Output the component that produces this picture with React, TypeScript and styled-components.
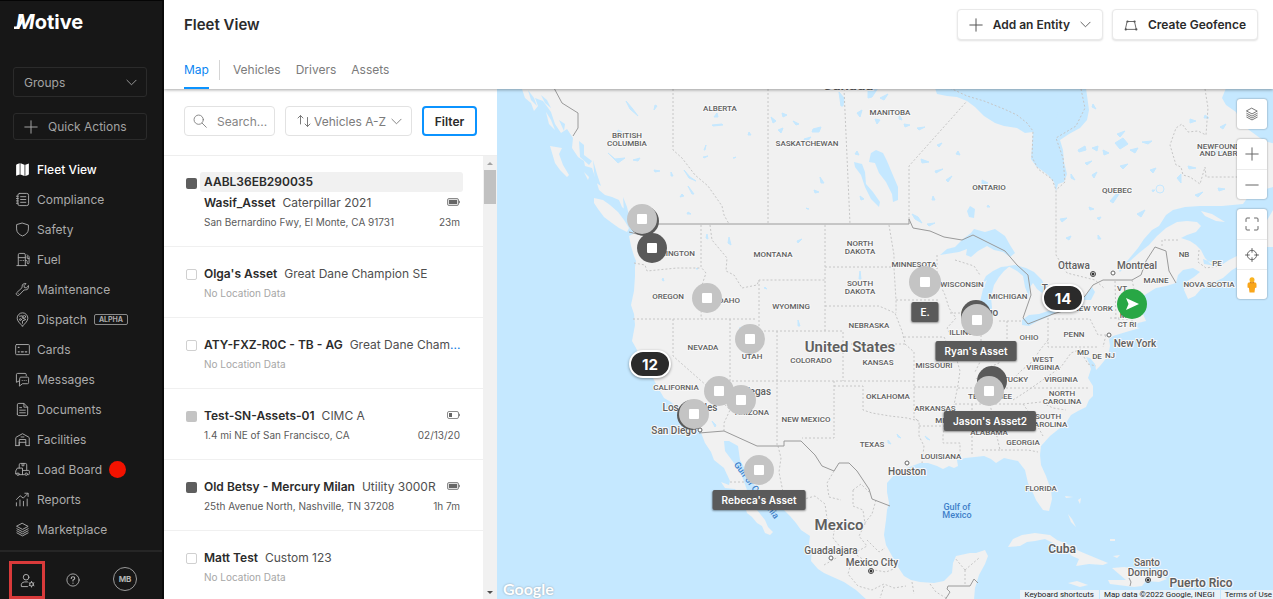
import React from "react";
import styled, { createGlobalStyle, css } from "styled-components";

const GlobalStyle = createGlobalStyle`
  *, *::before, *::after { box-sizing: border-box; }
  html, body { margin: 0; height: 100%; }
  #root { height: 100vh; }
  body {
    font-family: Inter, "Liberation Sans", sans-serif;
    font-size: 12px;
    color: #2b2b2b;
    background: #fff;
  }
  button, input, select { font: inherit; color: inherit; margin: 0; }
  button { cursor: pointer; }
  a { color: inherit; text-decoration: none; }
`;

/* ---------- shell ---------- */

const Shell = styled.div`
  display: grid;
  grid-template-columns: 164px minmax(0, 1fr);
  height: 100%;
  overflow: hidden;
`;

const Sidebar = styled.aside`
  display: flex;
  flex-direction: column;
  background: #171717;
  border-top: 1px solid #050505;
  border-right: 2px solid #0b0b0b;
  color: #b4b4b4;
  overflow: hidden;
`;

const Brand = styled.a`
  display: block;
  height: 66px;
  padding: 9px 0 0 12px;
`;

const BrandText = styled.text`
  font: 700 20px Inter, sans-serif;
  fill: #fff;
`;

const SideControls = styled.div`
  display: flex;
  flex-direction: column;
  gap: 16px;
  padding: 0 15px 14px 13px;
`;

const sideBox = css`
  display: flex;
  align-items: center;
  border: 1px solid #2b2b2b;
  border-radius: 3px;
  background: transparent;
  color: #a3a3a3;
`;

const GroupPicker = styled.label`
  ${sideBox}
  height: 30px;
  padding: 0 9px 0 10px;
`;

const BareSelect = styled.select`
  appearance: none;
  flex: 1;
  min-width: 0;
  padding: 0;
  border: 0;
  outline: 0;
  background: transparent;
`;

const QuickButton = styled.button`
  ${sideBox}
  height: 27px;
  padding: 0 10px;
  gap: 10px;
`;

const NavList = styled.ul`
  flex: 1;
  margin: 0;
  padding: 0;
  list-style: none;
`;

const NavLink = styled.a<{ $active?: boolean }>`
  display: flex;
  align-items: center;
  gap: 7px;
  height: 30px;
  padding-left: 15px;
  color: ${(p) => (p.$active ? "#fff" : "#ababab")};
  font-weight: ${(p) => (p.$active ? 500 : 400)};
`;

const AlphaTag = styled.span`
  padding: 0 4px;
  border: 1px solid #8a8a8a;
  border-radius: 2px;
  font-size: 7px;
  font-weight: 700;
  line-height: 9px;
`;

const RedDot = styled.span`
  width: 17px;
  height: 17px;
  border-radius: 50%;
  background: #f21200;
`;

const SideFooter = styled.div`
  display: flex;
  align-items: flex-end;
  height: 49px;
  flex: none;
  padding-left: 9px;
  border-top: 2px solid #262626;
  color: #b4b4b4;
`;

const FooterButton = styled.button<{ $marked?: boolean }>`
  display: grid;
  place-items: center;
  width: 36px;
  height: 38px;
  padding: 0;
  border: 3px solid ${(p) => (p.$marked ? "#d93a3a" : "transparent")};
  background: transparent;
  & + & { margin-left: 10px; }
`;

const Avatar = styled.button`
  width: 24px;
  height: 24px;
  margin: 0 0 8px 22px;
  padding: 0;
  border: 1px solid #9a9a9a;
  border-radius: 50%;
  background: transparent;
  font-size: 8px;
  font-weight: 700;
`;

/* ---------- header ---------- */

const Main = styled.main`
  display: flex;
  flex-direction: column;
  min-width: 0;
  height: 100%;
  overflow: hidden;
`;

const Header = styled.header`
  position: relative;
  z-index: 2;
  display: flex;
  flex-direction: column;
  justify-content: space-between;
  flex: none;
  height: 89px;
  padding: 9px 15px 0 20px;
  background: #fff;
  box-shadow: 0 1px 3px rgba(0, 0, 0, 0.35);
`;

const HeaderTop = styled.div`
  display: flex;
  align-items: center;
  justify-content: space-between;
`;

const Title = styled.h1`
  margin: 0;
  font-size: 15px;
  font-weight: 600;
`;

const Actions = styled.div`
  display: flex;
  gap: 9px;
`;

const ActionButton = styled.button`
  display: flex;
  align-items: center;
  gap: 10px;
  height: 31px;
  padding: 0 11px;
  border: 1px solid #e9e9e9;
  border-radius: 4px;
  background: #fff;
  box-shadow: 0 1px 2px rgba(0, 0, 0, 0.12);
  font-weight: 600;
  svg { color: #555; }
`;

const Tabs = styled.nav`
  display: flex;
  gap: 15px;
  height: 36px;
  color: #7b7b7b;
`;

const Tab = styled.a<{ $active?: boolean }>`
  height: 36px;
  line-height: 34px;
  border-bottom: 2px solid transparent;
  ${(p) => p.$active && "color: #0b86f3; border-color: #0b93ff;"}
`;

const TabDivider = styled.span`
  width: 1px;
  height: 20px;
  margin: 7px -2px 0 -5px;
  background: #d5d5d5;
`;

/* ---------- list panel ---------- */

const Body = styled.div`
  display: grid;
  grid-template-columns: 333px minmax(0, 1fr);
  flex: 1;
  min-height: 0;
`;

const Panel = styled.section`
  display: flex;
  flex-direction: column;
  min-height: 0;
`;

const Filters = styled.div`
  display: flex;
  gap: 10px;
  flex: none;
  padding: 17px 20px 19px;
`;

const filterBox = css`
  display: flex;
  align-items: center;
  height: 30px;
  border: 1px solid #e2e2e2;
  border-radius: 4px;
  background: #fff;
  color: #7b7b7b;
`;

const SearchBox = styled.label`
  ${filterBox}
  flex: none;
  width: 91px;
  gap: 10px;
  padding: 0 6px 0 8px;
  svg { flex: none; }
`;

const SearchInput = styled.input`
  width: 100%;
  min-width: 0;
  padding: 0;
  border: 0;
  outline: 0;
  background: transparent;
  &::placeholder { color: #858585; opacity: 1; }
`;

const SortBox = styled.label`
  ${filterBox}
  flex: 1;
  min-width: 0;
  gap: 3px;
  padding: 0 9px 0 11px;
  svg { flex: none; }
`;

const FilterButton = styled.button`
  flex: none;
  width: 55px;
  height: 30px;
  padding: 0;
  border: 2px solid #0b93ff;
  border-radius: 4px;
  background: #fff;
  font-weight: 600;
`;

const ListArea = styled.div`
  display: grid;
  grid-template-columns: minmax(0, 1fr) 14px;
  flex: 1;
  min-height: 0;
  border-top: 1px solid #eee;
`;

const Rows = styled.ul`
  margin: 0;
  padding: 0;
  list-style: none;
  overflow: hidden;
`;

const Row = styled.li`
  display: grid;
  grid-template-columns: 11px minmax(0, 1fr);
  column-gap: 7px;
  padding: 16px 23px 16px 22px;
  border-bottom: 1px solid #f0f0f0;
`;

const Status = styled.span<{ $kind: "off" | "idle" | "none" }>`
  width: 11px;
  height: 11px;
  margin-top: 6px;
  border-radius: 2px;
  ${(p) => p.$kind === "off" && "background: #5e5e5e;"}
  ${(p) => p.$kind === "idle" && "background: #c4c4c4;"}
  ${(p) => p.$kind === "none" && "border: 1px solid #d0d0d0;"}
`;

const Serial = styled.div`
  margin: 0 -3px 0 -4px;
  padding-left: 4px;
  border-radius: 3px;
  background: #f1f1f1;
  font-weight: 600;
  line-height: 20px;
`;

const Line = styled.div`
  display: flex;
  align-items: center;
  justify-content: space-between;
  height: 20px;
`;

const Names = styled.div`
  flex: 1;
  min-width: 0;
  white-space: nowrap;
  color: #4f4f4f;
`;

const Name = styled.strong`
  margin-right: 7px;
  font-weight: 600;
  color: #2b2b2b;
`;

const Dots = styled.span`
  color: #0b78e3;
`;

const Small = styled.div<{ $muted?: boolean }>`
  display: flex;
  justify-content: space-between;
  height: 18px;
  font-size: 10px;
  line-height: 20px;
  color: ${(p) => (p.$muted ? "#a6a6a6" : "#5a5a5a")};
`;

const ScrollTrack = styled.div`
  display: flex;
  flex-direction: column;
  align-items: center;
  background: #f1f1f1;
`;

const ScrollThumb = styled.span`
  width: 12px;
  height: 34px;
  margin-bottom: auto;
  background: #c1c1c1;
`;

const ScrollArrow = styled.span<{ $down?: boolean }>`
  width: 6px;
  height: 3px;
  margin: ${(p) => (p.$down ? "5px 0" : "6px 0 5px")};
  background: ${(p) => (p.$down ? "#505050" : "#a3a3a3")};
  clip-path: ${(p) => (p.$down ? "polygon(0 0, 100% 0, 50% 100%)" : "polygon(0 100%, 100% 100%, 50% 0)")};
`;

/* ---------- map ---------- */

const MapArea = styled.section`
  position: relative;
  overflow: hidden;
  background: #c5e8ff;
`;

const MapSvg = styled.svg`
  display: block;
  width: 100%;
  height: 100%;
`;

const MapText = styled.text<{ $size?: number; $weight?: number; $color?: string }>`
  font-family: Roboto, sans-serif;
  font-size: ${(p) => p.$size ?? 8}px;
  font-weight: ${(p) => p.$weight ?? 500};
  fill: ${(p) => p.$color ?? "#5f5f5f"};
  stroke: ${(p) => (p.$color ? "none" : "#f8f8f8")};
  stroke-width: 2px;
  stroke-linejoin: round;
  paint-order: stroke;
  text-anchor: middle;
`;

const onMap = css<{ $x: number; $y: number }>`
  position: absolute;
  left: ${(p) => p.$x}px;
  top: ${(p) => p.$y}px;
  transform: translate(-50%, -50%);
`;

const Pin = styled.button<{ $x: number; $y: number; $tone: string; $big?: boolean }>`
  ${onMap}
  display: grid;
  place-items: center;
  width: ${(p) => (p.$big ? 32 : 30)}px;
  height: ${(p) => (p.$big ? 32 : 30)}px;
  padding: 0;
  border: 0;
  border-radius: 50%;
  background: ${(p) => p.$tone};
`;

const PinSquare = styled.span`
  width: 10px;
  height: 10px;
  border-radius: 1px;
  background: #fff;
`;

const Cluster = styled.button<{ $x: number; $y: number }>`
  ${onMap}
  width: 42px;
  height: 28px;
  padding: 0;
  border: 2px solid #fff;
  border-radius: 14px;
  background: #2b2b2b;
  box-shadow: 0 1px 3px rgba(0, 0, 0, 0.4);
  color: #fff;
  font-size: 15px;
  font-weight: 700;
`;

const PinLabel = styled.span<{ $x: number; $y: number }>`
  ${onMap}
  height: 20px;
  padding: 0 9px;
  border-radius: 2px;
  background: #5a5a5a;
  box-shadow: 0 1px 2px rgba(0, 0, 0, 0.4);
  color: #fff;
  font-size: 10px;
  font-weight: 600;
  line-height: 20px;
  white-space: nowrap;
`;

const MapControls = styled.div`
  position: absolute;
  top: 10px;
  right: 6px;
  display: flex;
  flex-direction: column;
  gap: 10px;
`;

const ControlGroup = styled.div`
  display: flex;
  flex-direction: column;
  border-radius: 3px;
  background: #fff;
  box-shadow: 0 0 2px rgba(0, 0, 0, 0.45);
`;

const ControlButton = styled.button`
  display: grid;
  place-items: center;
  width: 30px;
  height: 30px;
  padding: 0;
  border: 0;
  background: transparent;
  color: #666;
  & + & { border-top: 1px solid #ececec; }
`;

const GoogleMark = styled.span`
  position: absolute;
  left: 6px;
  bottom: 0;
  color: #fff;
  font-family: Lato, sans-serif;
  font-size: 16px;
  font-weight: 700;
  line-height: 20px;
  text-shadow: 0 0 2px #8c9aa5;
`;

const Attribution = styled.div`
  position: absolute;
  right: 0;
  bottom: 0;
  display: flex;
  gap: 1px;
  color: #222;
  font-family: Roboto, sans-serif;
  font-size: 8px;
  line-height: 9px;
  a, span { padding: 0 5px 0 4px; background: rgba(245, 245, 245, 0.75); white-space: nowrap; }
  a:last-child { padding-right: 1px; }
`;

/* ---------- icons ---------- */

type IconProps = { children: React.ReactNode; size?: number; box?: number; width?: number };

const Icon = ({ children, size = 15, box = 16, width = 1 }: IconProps) => (
  <svg
    width={size}
    height={size}
    viewBox={`0 0 ${box} ${box}`}
    fill="none"
    stroke="currentColor"
    strokeWidth={width}
    strokeLinecap="round"
    strokeLinejoin="round"
    aria-hidden="true"
  >
    {children}
  </svg>
);

const Chevron = () => (
  <Icon size={11} box={12}><path d="M1 3.500l5 5 5-5" /></Icon>
);
const Plus = ({ size = 14 }: { size?: number }) => (
  <Icon size={size} box={14}><path d="M7 .8v12.400M.8 7h12.400" /></Icon>
);
const LayersIcon = ({ size = 15 }: { size?: number }) => (
  <Icon size={size}>
    <path d="M8 1.500l6 3.200-6 3.200-6-3.200z" />
    <path d="M2 7.200l6 3.200 6-3.200M2 9.400l6 3.200 6-3.200M2 11.600l6 3.200 6-3.200" />
  </Icon>
);

const icons: Record<string, React.ReactNode> = {
  fleet: (
    <svg width="15" height="15" viewBox="0 0 16 16" fill="currentColor" aria-hidden="true">
      <path d="M1.200 3.400Q1.200 2.600 2 2.300L4.900 1.400V13.400L1.200 14.600zM6 1.400l4 1.600v12L6 13.400zM11.100 3l3.700-1.400v11.200q0 .8-.8 1l-2.900 1.100z" />
      <path d="M4.500 1.500h2v12h-2zM9.800 3h1.600v12H9.800z" fillOpacity=".35" />
    </svg>
  ),
  compliance: (
    <Icon>
      <rect x="3" y="1.500" width="11.500" height="13" rx="2" />
      <path d="M6 5h5.500M6 8h5.500M6 11h5.500M1.500 4.500h2M1.500 7h2M1.500 9.500h2M1.500 12h2" />
    </Icon>
  ),
  safety: <Icon><path d="M8 1.200l6.300 2v4.200c0 3.800-2.700 6.200-6.300 7.500C4.400 13.600 1.700 11.200 1.700 7.400V3.200z" /></Icon>,
  fuel: (
    <Icon>
      <path d="M3.500 14.500V3q0-1.500 1.500-1.500h4.500Q11 1.500 11 3v11.500M2 14.500h10.500M3.500 6H11M5.500 9v.1M7.300 9v.1M9 9v.1M11 9h1q1 0 1 1v1.500q0 1 1 1t1-1V5l-2-2M13 4.500v2.200l2 .3" />
    </Icon>
  ),
  maintenance: (
    <Icon>
      <path d="M14.300 4.300l-2.300 2-2-.4-.4-2 2.100-2.200C9.500 1 7.400 2.500 7.600 5l-.2 1.200-5.600 5.200c-1.500 1.600.9 4 2.500 2.600l5.400-5.500 1.300-.1c2.400.1 4.200-1.800 3.300-4.100z" />
      <path d="M3.400 12.500v.1" />
    </Icon>
  ),
  dispatch: (
    <Icon>
      <path d="M8 15C5 12 2.300 9.500 2.300 6.600a5.700 5.700 0 0 1 11.400 0C13.700 9.500 11 12 8 15z" />
      <circle cx="10" cy="5" r="1.300" />
      <circle cx="5.800" cy="8" r="1" />
      <path d="M4.800 4.500l3-.5v2.500L11.500 8 8 9.500V12" />
    </Icon>
  ),
  cards: (
    <Icon>
      <rect x=".7" y="2.700" width="14.600" height="10.800" rx="1" />
      <path d="M3.500 5.700h.8M3.500 10.500h1M6.800 10.500h2M11 10.500h1.500" strokeWidth="1.400" />
    </Icon>
  ),
  messages: (
    <Icon>
      <path d="M4.500 9.500L1.500 11V2.800q0-1.300 1.300-1.300h8q1.200 0 1.200 1.300V4" />
      <path d="M5 6.700q0-1.200 1.200-1.200h7.100q1.200 0 1.200 1.200v4.600q0 1.200-1.200 1.200H8l-3 2.300zM7.700 9v.1M9.800 9v.1M11.900 9v.1" />
    </Icon>
  ),
  documents: (
    <Icon>
      <path d="M2.500 13V3q0-1.500 1.500-1.500h5.500l4 4V13q0 1.500-1.500 1.500H4q-1.500 0-1.500-1.500z" />
      <path d="M9.500 1.500v4h4M5 6h2M5 8.700h6M5 11.500h6" />
    </Icon>
  ),
  facilities: (
    <Icon>
      <path d="M.8 14.500V6.500q0-.8.8-1.200L8 1.800l6.400 3.500q.8.400.8 1.200v8M.8 14.500h3.700V8h7v6.500h3.700M4.500 11h7M4.500 14.500V11M6.500 5.300h3" />
    </Icon>
  ),
  load: (
    <Icon>
      <path d="M4.500 6.500V3q0-1.500 1.500-1.500h5Q12.500 1.500 12.500 3v5.500M7.500 1.500v2.500h2V1.500" />
      <path d="M.8 12.500v-3l1.700-3H8v7M.8 12.500h1M4.700 13.500H10M8 9h6.500q.8 0 .8.800v2.700q0 1-1 1h-.5" />
      <circle cx="3.200" cy="13" r="1.300" />
      <circle cx="12" cy="13" r="1.300" />
    </Icon>
  ),
  reports: (
    <Icon>
      <path d="M1.500 14.800v-3.300M5.300 14.800V8.500M9 14.800V10M13 14.800V7.500M1.500 8l4-4 3.300 2.500 5-5M10.500 1.300h3.500v3.500" />
    </Icon>
  ),
  market: <LayersIcon />,
};

const Battery = ({ low }: { low?: boolean }) => (
  <svg width="13" height="8" viewBox="0 0 13 8" aria-label={low ? "Battery low" : "Battery full"} role="img">
    <rect x=".5" y=".5" width="11" height="7" rx="1.500" fill={low ? "none" : "#dcdcdc"} stroke="#8c8c8c" />
    <rect x="2" y="2" width={low ? 3 : 8} height="4" fill="#666" />
    <path d="M12.500 2.800v2.400" stroke="#8c8c8c" />
  </svg>
);

/* ---------- data ---------- */

const navItems: [string, string][] = [
  ["fleet", "Fleet View"],
  ["compliance", "Compliance"],
  ["safety", "Safety"],
  ["fuel", "Fuel"],
  ["maintenance", "Maintenance"],
  ["dispatch", "Dispatch"],
  ["cards", "Cards"],
  ["messages", "Messages"],
  ["documents", "Documents"],
  ["facilities", "Facilities"],
  ["load", "Load Board"],
  ["reports", "Reports"],
  ["market", "Marketplace"],
];

type Asset = {
  status: "off" | "idle" | "none";
  serial?: string;
  name: string;
  model: string;
  cut?: boolean;
  place?: string;
  when?: string;
  battery?: "full" | "low";
};

const assets: Asset[] = [
  { status: "off", serial: "AABL36EB290035", name: "Wasif_Asset", model: "Caterpillar 2021", place: "San Bernardino Fwy, El Monte, CA 91731", when: "23m", battery: "full" },
  { status: "none", name: "Olga's Asset", model: "Great Dane Champion SE" },
  { status: "none", name: "ATY-FXZ-R0C - TB - AG", model: "Great Dane Cham", cut: true },
  { status: "idle", name: "Test-SN-Assets-01", model: "CIMC A", place: "1.4 mi NE of San Francisco, CA", when: "02/13/20", battery: "low" },
  { status: "off", name: "Old Betsy - Mercury Milan", model: "Utility 3000R", place: "25th Avenue North, Nashville, TN 37208", when: "1h 7m", battery: "full" },
  { status: "none", name: "Matt Test", model: "Custom 123" },
];

const LIGHT = "#c4c4c4";
const DARK = "#5a5a5a";

const pins: { x: number; y: number; tone: string; big?: boolean; name: string }[] = [
  { x: 147, y: 132, tone: DARK, name: "Seattle asset" },
  { x: 145, y: 130, tone: LIGHT, name: "Vancouver asset" },
  { x: 155, y: 159, tone: DARK, name: "Washington asset" },
  { x: 210, y: 209, tone: LIGHT, name: "Idaho asset" },
  { x: 253, y: 250, tone: LIGHT, name: "Utah asset" },
  { x: 428, y: 193, tone: LIGHT, big: true, name: "Minnesota asset" },
  { x: 479, y: 226, tone: DARK, name: "Chicago asset" },
  { x: 480, y: 231, tone: LIGHT, big: true, name: "Illinois asset" },
  { x: 495, y: 292, tone: DARK, name: "Kentucky asset" },
  { x: 492, y: 302, tone: LIGHT, name: "Tennessee asset" },
  { x: 244, y: 311, tone: LIGHT, name: "Arizona asset" },
  { x: 222, y: 302, tone: LIGHT, name: "Las Vegas asset" },
  { x: 195, y: 326, tone: DARK, name: "Los Angeles asset" },
  { x: 197, y: 325, tone: LIGHT, name: "San Diego asset" },
  { x: 262, y: 381, tone: LIGHT, name: "Sonora asset" },
];

const pinLabels: [string, number, number][] = [
  ["E.", 428, 223],
  ["Ryan's Asset", 479, 262],
  ["Jason's Asset2", 493, 332],
  ["Rebeca's Asset", 262, 411],
];

const regionLabels: [string, number, number][] = [
  ["ALBERTA", 720, 111], ["BRITISH", 627, 138], ["COLUMBIA", 627, 146], ["MANITOBA", 890, 115],
  ["SASKATCHEWAN", 807, 146], ["ONTARIO", 989, 190], ["QUEBEC", 1117, 193], ["NEWFOUNDLAND", 1229, 149],
  ["AND LABRADOR", 1229, 156], ["WASHINGTON", 669, 256], ["MONTANA", 773, 257], ["NORTH", 860, 246],
  ["DAKOTA", 860, 254], ["SOUTH", 860, 286], ["DAKOTA", 860, 294], ["MINNESOTA", 914, 267],
  ["WISCONSIN", 962, 287], ["MICHIGAN", 1008, 299], ["OREGON", 668, 299], ["IDAHO", 728, 303],
  ["WYOMING", 791, 309], ["NEBRASKA", 869, 328], ["ILLINOIS", 965, 335], ["OHIO", 1029, 340],
  ["PENN", 1074, 337], ["NEW YORK", 1093, 311], ["VT", 1122, 291], ["MAINE", 1156, 283],
  ["NB", 1184, 257], ["PE", 1217, 266], ["NOVA SCOTIA", 1209, 287], ["CT RI", 1127, 327],
  ["MA", 1126, 318], ["NEVADA", 703, 350], ["UTAH", 752, 359], ["COLORADO", 811, 363],
  ["KANSAS", 878, 365], ["MISSOURI", 934, 368], ["CALIFORNIA", 676, 390], ["ARIZONA", 752, 415],
  ["NEW MEXICO", 806, 422], ["OKLAHOMA", 888, 399], ["ARKANSAS", 935, 411], ["TEXAS", 872, 447],
  ["LOUISIANA", 941, 459], ["MISSISSIPPI", 958, 423], ["ALABAMA", 989, 435], ["GEORGIA", 1023, 445],
  ["KENTUCKY", 1008, 382], ["TENNESSEE", 990, 399], ["WEST", 1043, 362], ["VIRGINIA", 1043, 370],
  ["VIRGINIA", 1061, 382], ["NORTH", 1062, 396], ["CAROLINA", 1062, 404], ["SOUTH", 1048, 419],
  ["CAROLINA", 1048, 427], ["MD", 1083, 355], ["DE", 1097, 359], ["NJ", 1110, 358], ["FLORIDA", 1041, 491],
];

const cityLabels: [string, number, number][] = [
  ["Ottawa", 1074, 269], ["Montreal", 1137, 269], ["Toronto", 1059, 292], ["Chicago", 980, 316],
  ["New York", 1135, 347], ["Las Vegas", 748, 395], ["Los Angeles", 690, 411], ["San Diego", 674, 434],
  ["Houston", 907, 475], ["Guadalajara", 831, 554], ["Mexico City", 872, 566], ["Santo", 1147, 566],
  ["Domingo", 1148, 576],
];

const land = [
  "M515 80L522 89 525 98 531 103 534 111 538 106 535 98 543 101 551 112 555 124 561 133 567 129 573 138 572 148 578 157 584 161 585 166 592 168 596 180 599 190 605 195 612 197 619 200 622 207 627 211 629 221 635 226 633 234 629 236 631 246 634 256 636 261 635 267 635 276 634 291 631 305 634 314 635 325 632 341 636 348 640 357 645 366 653 378 657 386 664 398 671 402 679 410 687 416 694 425 700 430 705 443 711 452 714 460 724 468 730 481 729 485 721 482 725 488 735 489 743 500 747 513 752 517 757 523 762 526 765 533 770 535 773 532 768 527 765 520 757 510 752 500 747 490 742 476 734 463 725 451 724 441 729 441 738 446 740 460 747 473 757 489 766 497 774 503 784 510 790 516 796 523 801 530 810 536 809 544 812 549 811 561 818 569 824 573 844 582 856 590 867 600 L974 600 975 588 979 575 985 564 988 556 985 550 976 553 970 553 956 556 953 563 952 573 944 581 934 583 920 582 911 580 904 576 898 567 892 556 886 545 884 535 886 520 887 510 889 503 887 492 887 483 894 475 901 471 907 468 920 463 928 463 937 466 943 469 949 466 954 468 958 466 957 460 965 458 975 457 984 456 991 459 996 463 1004 458 1013 460 1018 461 1025 470 1028 483 1033 493 1036 500 1043 510 1049 511 1052 499 1051 490 1046 476 1041 465 1040 455 1041 446 1050 436 1060 428 1066 423 1071 415 1078 411 1086 407 1089 400 1093 396 1093 386 1088 378 1091 369 1089 363 1086 357 1090 358 1095 364 1096 370 1100 366 1108 356 1110 346 1109 339 1113 336 1126 332 1140 328 1132 327 1138 323 1146 321 1143 314 1139 310 1140 303 1143 296 1156 288 1166 286 1176 283 1178 275 1183 270 1193 268 1200 272 1194 277 1186 282 1184 290 1188 299 1195 296 1201 289 1212 283 1223 278 1232 270 1241 265 1237 256 1229 260 1220 266 1211 264 1205 258 1201 250 1196 245 1190 241 1181 238 1187 235 1196 232 1201 226 1197 222 1187 221 1177 222 1166 228 1157 236 1149 245 1139 253 1129 262 1120 272 1119 271 1128 260 1138 248 1144 239 1152 230 1159 226 1166 215 1173 210 1185 207 1200 206 1222 206 1243 204 1248 197 1256 192 1273 187 1280 186 1280 145 1268 142 1260 138 1249 130 1240 121 1236 112 1226 105 1222 98 1226 88 1223 80z",
  "M594 198l9 2 7 5 8 7 6 8 5 8-2 4-8-4-7-5-8-6-6-8-4-6z",
  "M550 146l12 2-3 6 4 11 6 10-2 2-7-7-5-7z",
  "M1008 547l5-8 9-4 13-2 15 2 7 5 10 4 12 7 12 5 17 7-5 2-14-1-13 2 3-7-7-3-8-8-11-5-8-4-10 2-8 1-7 4z",
  "M1112 568l12-1 14 2 14 2 10 5 5 3-8 3-13-1-4 5-8 1-24-3-2-4 18 0z",
  "M1068 583l9-2 11 4-8 2z",
  "M1065 496l8 1-7 1zM1078 500l3-2-1 6zM1068 514l4 5 4 8-5-5zM1110 539h5v2h-5zM1113 556l7-1-3 3z",
  "M1201 211l11 3 13 8-9-1-11-5z",
  "M1203 259l10 4 8-1-5 4-12-2z",
  "M1273 210l-7 12-6 22 6 3 14 0v-40z",
  "M541 95l6 5 4 8-6-5zM528 90l6 8 3 8-6-6zM546 112l5 8 4 10-6-6zM559 120l6 4-1 7zM584 172l5 5-1 3z",
].join("");

const water = [
  "M934 85l3 9 10 2 10 1 10 4 8 6 9 9 11 7 9 3 13 2 8 5 8-1-1 14-1 13 5 7 12 9 6 7 2 9 2-7 6-2 3-8-3-12-1-12-3-10 9-6 11-6 7-8 2-10-3-22z",
  "M940 255l7-6 8-2 8-8 8-6 3-4 11 3 10-3 10 7 5 9 5 8-5 4-7-5-9-2-7-4-9 5-7 6-5-2 1-6-8 3z",
  "M986 276l7-5 8-4 9-1-6 5-5 6-5 8-3 12 1 11-1 9-7 5-5-7 1-13 3-13 4-9-5 4z",
  "M1008 266l7-1 11 3 8 4 8 8 3 7-3 6-5-4-4-6-3 4-1 10-4-10-2-11-6-5z",
  "M1022 320l7-5 10-1 9-3 9 0-7 5-12 5-9 5-7-1z",
  "M1081 300l6-6 5-7 3 5-4 8z",
  "M871 153l5-3 7 3 4 8 5 12 6 14 0 13-5 2-1-8-6-12-7-9-4-10-6-1 1-5z",
  "M854 162l8 2 3 8 1 12 7 8 7 10-1 5-8-8-6-12-4-12-6-8z",
  "M967 211l3-5 5 3-1 9-5-1z",
  "M579 141l5 4 0 10 8 6-3 4-9-8zM593 160l4 14 4 12-6-4zM623 197l4 10 3 12 4 6-4-1-6-12zM618 208l-7-4-8-6 10 3z",
].join("");

const lakes = [
  "M626 101l6 7 6 8-8-7zM655 105l2 1-3 4zM608 153l7 6 10-1-7 5zM618 130l4 2-5 1zM640 158l-7 2 5 1zM654 170l6 1-5 1zM671 172l2 4-2 0zM684 170l6 7 6 4-7-3zM688 186l6 8-2 0zM688 212l3 2-4 0zM682 194l2 2-4 1zM703 157l5-1-4 2zM706 145l-1 5-1 0zM712 125l10-1 1 1-10 1zM749 132l2 3-3 0zM717 113l-3 4 4 0zM736 157l-3 1 2 0zM729 237l2 8-3-2zM707 234l1 5-2-1zM663 278l1 3-2-1zM697 268l1 1-2 0z",
  "M782 113l5 2-4 2zM793 121l6 3-3 1zM813 129l8-2-2 5-7 0zM771 117l5 4-3 2zM778 130l5-2-2 5zM804 139l7-2-5 6zM820 177l4 6-3 0zM814 190l5 2-4 1zM806 208l3 1-2 0zM797 241l5-2-4 4zM839 92l5 6-1 8-2 0zM868 89l12-4-8 12-4 1zM880 98l8-4-4 6zM862 110l-2 7-3-4zM875 119l5 1-3 4zM904 124l6 1-5 2zM917 128l8-1-6 3zM921 159l8 3-7 1zM937 145l5-2-3 4zM958 151l2 4-4-1zM935 171l8-2-7 4zM946 180l6-4-4 6zM982 180l6 3-6 1zM988 205l2 2-3 0zM912 214l6 3 4 6-7-4zM927 224l8-1-6 3zM933 196l2 4-3 0zM857 151l2 4-4-1zM899 113l3 7-3-1zM860 196l4 3-3 1zM765 287l2 2-3-1zM798 320l2 6-2 0zM860 271l1 8-2 0z",
  "M1052 108l8-6 4 4-6 6-2 6-4-4zM1078 150l7-4 1 4-7 2zM1092 148l6-2-1 5zM1103 150l6 3-5 2zM1115 143l8-5 5 6-8 5zM1130 150l8-2-3 5zM1117 134l8-3-5 6zM1142 142l10-1-4 3zM1085 163l7-2-5 4zM1092 175l5-3-3 6zM1120 166l8-2-5 5zM1110 201l8-9 3-1-8 12zM1071 174l4 6-4-2zM1060 219l7-1-5 4zM1066 238l5-2-2 4zM1089 207l5 2-4 1zM1098 235l3 4-3 0zM1137 214l8-4-4 7zM1150 170l6-2-3 5zM1177 178l4-4 0 9zM1188 166l8 2-7 1zM1190 119l6 2-6 2zM1205 115l4 3-5 0zM1220 127l6-3-3 5zM1215 151l8 1-7 2zM1195 195l8-3-5 5zM1218 188l7 1-6 2zM1152 190l3 0-2 2zM1067 120l4-2-2 5zM1093 104l3 5-4-2zM1097 218l4-1-2 3z",
  "M740 327l3 6 0 3-3-4zM712 421l4 4-1 2zM925 436l5 4-3-1zM897 434l4 4-3-1zM888 440l3 4-3-1zM717 488l3 1-2 1zM1043 488l2 2-3 0z",
].join("");

const solidBorders =
  "M554 88l8 15 16 10 0 15-5 8M629 232l12 3 12-3 4-8h252v-5l4 9 17 3 14 6 18 3 11-5 32 16 12 14 11 10 3 20-8 23 5 6 25-10 20-6 12-12 8-11 10-5h29l9-5 5-14 9-14 11 4 3 20 7 12M699 433l25-2 33 15h27v-5h17l14 14 7 11 12 5 5-8h10l8 8 12 18 3 10 18 7M945 600l5-8-3-3 1-3h22l4-7 4 4M1129 578l2 4-1 4";

const dashedBorders =
  "M673 89v61l9 8 13 17 13 11 14 20 2 9 5 9M768 89v135M844 89l6 135M909 219v-53l58-65M950 88l17 8 17 5 20 8 13 6 10 8 6 8-1 26 6 12 14 10 4 11v65l11 18 28 7 10 9M1081 89l4 19-9 18-20 12 7 20 2 24-9 8M1205 89l3 19-2 27-8-4-10 1-6-8-6 4-6 17 6 20 5 2 2 8 7 2 10 7 5-17 1 10h37M1162 246v-6h18M1199 250l-1 12 8 6 12-2M634 263l11 2 2 6 30-3h24M701 225v42l5 6-4 12-1 34M633 319h124M710 225l2 15 15 18-1 13 8 4 8 13 15-3 2-5h66M759 280v51h84v50M825 225v106M673 319v37l34 30 23 24-6 13v8M730 319v62M712 381h202M777 331v115M834 381v57h-32M834 386h29v24l9 3 18 3 17 2 12 3v15l5 10-2 17M825 306h54l16 7 7 18 3 12M843 344h62M825 267h69M889 225l5 30v13l2 32v13M896 300h44M904 337h40l4 8 8 12 4 14-2 14-4 20-8 16-3 14v8h17v12M905 344l9 8v66l5 3M919 426h26M914 387h44M937 255v23l8 17 4 13 7 10-9 10 4 8M950 313h32M955 260l19 6 6 9M981 335v25l-6 12M1007 321v30l-8 12-14 6-9 10M999 321h23M1048 318v29h50M1054 319h36l8 16h8M1048 340l-8 10-8 12-10 8-10 10M958 388h130M955 404h68l18-2 12 6 13 2M972 404v52M990 404l6 28 4 18h28l10 2M1023 404l10 14 10 18M1013 400l14-9 20-14 14-10 10-14 10-4M982 450h18M1115 281l1 38h14M1132 280l4 18M1110 318h22v8M1106 335l-3 12M1080 350l8 14 8 2M778 446l3 12-2 14 4 20 18 8 14-4 10 8 2 14 8 8M834 471l-7 12 2 14 12 3M853 490l8-6 8 8M853 490v16l10 4 2 14-6 12 8 10-14 8-12-6-8-10 2-12M876 500l-4 14-8 10M867 540l12 12 6-4M812 552l14-4 12 6 14-2 12 8 10 10 12 2 10-4M824 565l14-8M852 560l-4 14 10 12 14 4 12-6 10 4 12-2M884 586l-4 12M912 582l2 12M930 584l6 8 10 6M965 570v14M965 570l-10-12M965 570l14-12M730 482h14";

/* ---------- pieces ---------- */

const FleetMap = () => (
  <MapArea aria-label="Fleet map">
    <MapSvg viewBox="497 89 776 510" preserveAspectRatio="xMinYMin slice" role="img" aria-label="Map of North America">
      <path d={land} fill="#f1f1f1" />
      <path d={water} fill="#c5e8ff" />
      <path d={lakes} fill="#c5e8ff" stroke="#c5e8ff" strokeWidth="1" strokeLinejoin="round" />
      <circle cx="1160" cy="189" r="4" fill="none" stroke="#c5e8ff" />
      <path d={dashedBorders} fill="none" stroke="#c6c6c6" strokeDasharray="2 2" strokeLinejoin="round" />
      <path d={solidBorders} fill="none" stroke="#9a9a9a" strokeLinejoin="round" />
      {regionLabels.map(([t, x, y], i) => (
        <MapText key={i} x={x} y={y}>{t}</MapText>
      ))}
      {cityLabels.map(([t, x, y]) => (
        <MapText key={t} x={x} y={y} $size={10}>{t}</MapText>
      ))}
      <MapText x="848" y="90" $size={15} $weight={600}>Canada</MapText>
      <MapText x="850" y="352" $size={15} $weight={600}>United States</MapText>
      <MapText x="839" y="530" $size={15} $weight={600}>Mexico</MapText>
      <MapText x="1062" y="553" $size={12} $weight={600}>Cuba</MapText>
      <MapText x="1201" y="587" $size={12} $weight={600}>Puerto Rico</MapText>
      <MapText x="957" y="510" $size={9} $color="#3f7fc9">Gulf of</MapText>
      <MapText x="957" y="518" $size={9} $color="#3f7fc9">Mexico</MapText>
      <MapText transform="translate(754 492) rotate(53)" $size={9} $color="#3f7fc9">Gulf of California</MapText>
      <g fill="#fff" stroke="#666">
        {[[1113, 273], [1109, 335], [907, 463], [831, 558], [700, 430]].map(([x, y]) => (
          <circle key={x} cx={x} cy={y} r="2" />
        ))}
      </g>
      {[[1093, 274], [871, 571], [1148, 580]].map(([x, y]) => (
        <g key={x}>
          <circle cx={x} cy={y} r="2.500" fill="#fff" stroke="#444" />
          <circle cx={x} cy={y} r="1.500" fill="#333" />
        </g>
      ))}
    </MapSvg>
    {pins.map((p) => (
      <Pin key={p.name} type="button" aria-label={p.name} $x={p.x} $y={p.y} $tone={p.tone} $big={p.big}>
        {p.tone === LIGHT || p.name === "Washington asset" ? <PinSquare /> : null}
      </Pin>
    ))}
    {pinLabels.map(([t, x, y]) => (
      <PinLabel key={t} $x={x} $y={y}>{t}</PinLabel>
    ))}
    <Cluster type="button" $x={153} $y={275}>12</Cluster>
    <Cluster type="button" $x={566} $y={209}>14</Cluster>
    <Pin type="button" aria-label="Moving vehicle" $x={635} $y={215} $tone="#28a745">
      <svg width="14" height="14" viewBox="0 0 14 14" fill="#fff" aria-hidden="true">
        <path d="M1 1l13 6-13 6 2.500-6z" />
      </svg>
    </Pin>
    <MapControls>
      <ControlGroup>
        <ControlButton type="button" aria-label="Map layers"><LayersIcon size={14} /></ControlButton>
      </ControlGroup>
      <ControlGroup>
        <ControlButton type="button" aria-label="Zoom in"><Plus /></ControlButton>
        <ControlButton type="button" aria-label="Zoom out"><Icon size={14} box={14}><path d="M.8 7h12.400" /></Icon></ControlButton>
      </ControlGroup>
      <ControlGroup>
        <ControlButton type="button" aria-label="Full screen">
          <Icon size={14} box={14}><path d="M1 4.500V2q0-1 1-1h2.500M9.500 1H12q1 0 1 1v2.500M13 9.500V12q0 1-1 1H9.500M4.500 13H2q-1 0-1-1V9.500" /></Icon>
        </ControlButton>
        <ControlButton type="button" aria-label="Centre map">
          <Icon size={14} box={14}><circle cx="7" cy="7" r="4.700" /><path d="M7 .5v3.800M7 9.700v3.800M.5 7h3.800M9.700 7h3.800" /></Icon>
        </ControlButton>
        <ControlButton type="button" aria-label="Street View">
          <svg width="10" height="16" viewBox="0 0 10 16" aria-hidden="true">
            <circle cx="5" cy="2.700" r="2.500" fill="#f9b31f" />
            <path d="M1.500 5.500h7q1 .5 1 2v3l-1.500.5-.5 4.500h-5L2 11l-1.500-.5v-3q0-1.500 1-2z" fill="#f9a61a" />
            <path d="M2.800 4.600q2.200 1.600 4.400 0v1.700H2.800zM2.200 8v3l.5 4M7.800 8v3" fill="#d9831a" />
          </svg>
        </ControlButton>
      </ControlGroup>
    </MapControls>
    <GoogleMark>Google</GoogleMark>
    <Attribution>
      <a href="#shortcuts">Keyboard shortcuts</a>
      <span>Map data ©2022 Google, INEGI</span>
      <a href="#terms">Terms of Use</a>
    </Attribution>
  </MapArea>
);

const AssetRow = ({ asset }: { asset: Asset }) => (
  <Row>
    <Status $kind={asset.status} />
    <div>
      {asset.serial && <Serial>{asset.serial}</Serial>}
      <Line>
        <Names>
          <Name>{asset.name}</Name>
          {asset.model}
          {asset.cut && <Dots>...</Dots>}
        </Names>
        {asset.battery && <Battery low={asset.battery === "low"} />}
      </Line>
      <Small $muted={!asset.place}>
        <span>{asset.place ?? "No Location Data"}</span>
        {asset.when && <span>{asset.when}</span>}
      </Small>
    </div>
  </Row>
);

export default function App() {
  return (
    <>
      <GlobalStyle />
      <Shell>
        <Sidebar>
          <Brand href="#home" aria-label="Motive">
            <svg width="76" height="24" viewBox="0 0 76 24">
              <path d="M2 17.800h2q2 0 3-1.500L11 9" fill="none" stroke="#fff" strokeWidth="2.600" />
              <BrandText x="4" y="19"><tspan fontStyle="italic">M</tspan>otive</BrandText>
            </svg>
          </Brand>
          <SideControls>
            <GroupPicker>
              <BareSelect aria-label="Groups" defaultValue="groups">
                <option value="groups">Groups</option>
              </BareSelect>
              <Chevron />
            </GroupPicker>
            <QuickButton type="button"><Plus />Quick Actions</QuickButton>
          </SideControls>
          <NavList>
            {navItems.map(([key, label]) => (
              <li key={key}>
                <NavLink href={`#${key}`} $active={key === "fleet"}>
                  {icons[key]}
                  {label}
                  {key === "dispatch" && <AlphaTag>ALPHA</AlphaTag>}
                  {key === "load" && <RedDot />}
                </NavLink>
              </li>
            ))}
          </NavList>
          <SideFooter>
            <FooterButton type="button" aria-label="Admin settings" $marked>
              <Icon size={15}>
                <circle cx="6.500" cy="4.500" r="3" />
                <path d="M8 14.500H1.500q-1-4.500 3.500-5h3" />
                <circle cx="12.300" cy="12" r="2" />
                <path d="M12.300 9v1M12.300 14v1M9.700 10.500l.9.500M14 13l.9.500M9.700 13.500l.9-.5M14 11l.9-.5" />
              </Icon>
            </FooterButton>
            <FooterButton type="button" aria-label="Help">
              <Icon size={14}><circle cx="8" cy="8" r="7" /><path d="M6 6.300q0-2 2-2t2 1.700q0 1.200-2 2v1M8 11.500v.2" strokeWidth="1.300" /></Icon>
            </FooterButton>
            <Avatar type="button">MB</Avatar>
          </SideFooter>
        </Sidebar>

        <Main>
          <Header>
            <HeaderTop>
              <Title>Fleet View</Title>
              <Actions>
                <ActionButton type="button"><Plus />Add an Entity<Chevron /></ActionButton>
                <ActionButton type="button">
                  <Icon size={14}>
                    <path d="M4 4h8l2 9H2z" />
                    <path d="M4 4h.1M12 4h.1M2 13h.1M14 13h.1" strokeWidth="2.500" />
                  </Icon>
                  Create Geofence
                </ActionButton>
              </Actions>
            </HeaderTop>
            <Tabs>
              <Tab href="#map" $active>Map</Tab>
              <TabDivider />
              <Tab href="#vehicles">Vehicles</Tab>
              <Tab href="#drivers">Drivers</Tab>
              <Tab href="#assets">Assets</Tab>
            </Tabs>
          </Header>

          <Body>
            <Panel>
              <Filters>
                <SearchBox>
                  <Icon size={14}><circle cx="6.500" cy="6.500" r="5.300" /><path d="M10.500 10.500l4.700 4.700" /></Icon>
                  <SearchInput type="text" placeholder="Search..." aria-label="Search" />
                </SearchBox>
                <SortBox>
                  <Icon size={14} box={14}><path d="M3.500 10V1.500M1 4l2.500-2.500L6 4M10.500 3.500v9M8 10l2.500 2.500L13 10" /></Icon>
                  <BareSelect aria-label="Sort by" defaultValue="az">
                    <option value="az">Vehicles A-Z</option>
                  </BareSelect>
                  <Chevron />
                </SortBox>
                <FilterButton type="button">Filter</FilterButton>
              </Filters>
              <ListArea>
                <Rows>
                  {assets.map((a) => <AssetRow key={a.name} asset={a} />)}
                </Rows>
                <ScrollTrack>
                  <ScrollArrow />
                  <ScrollThumb />
                  <ScrollArrow $down />
                </ScrollTrack>
              </ListArea>
            </Panel>
            <FleetMap />
          </Body>
        </Main>
      </Shell>
    </>
  );
}
